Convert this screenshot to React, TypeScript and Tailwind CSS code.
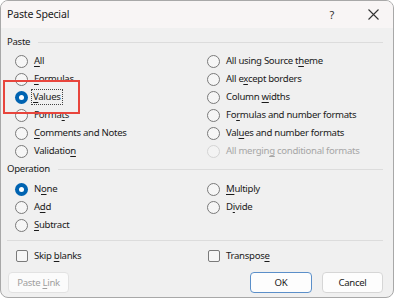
import React from "react";

const U = ({ children }: { children: React.ReactNode }) => <span className="underline underline-offset-[2px]">{children}</span>;

function Radio({ checked = false, disabled = false, children, focus = false }: { checked?: boolean; disabled?: boolean; children: React.ReactNode; focus?: boolean }) {
  return (
    <div className="flex h-[18px] items-center whitespace-nowrap">
      {checked ? (
        <span className="flex h-[13px] w-[13px] shrink-0 items-center justify-center rounded-full bg-[#0063b1]">
          <span className="h-[5px] w-[5px] rounded-full bg-white" />
        </span>
      ) : (
        <span className={`h-[13px] w-[13px] shrink-0 rounded-full border ${disabled ? "border-[#d4d4d4] bg-[#f3f3f3]" : "border-[#7a7a7a] bg-[#f6f6f6]"}`} />
      )}
      <span className={`${focus ? "ml-[4px] px-[1px] py-[2px] outline-1 outline-dotted outline-[#444]" : "ml-[6px]"} ${disabled ? "text-[#a6a6a6]" : "text-[#1b1b1b]"}`}>{children}</span>
    </div>
  );
}

function Check({ children }: { children: React.ReactNode }) {
  return (
    <div className="flex h-[16px] items-center whitespace-nowrap">
      <span className="h-[12px] w-[12px] rounded-[2px] border border-[#7a7a7a] bg-[#f6f6f6]" />
      <span className="ml-[6px] text-[#1b1b1b]">{children}</span>
    </div>
  );
}

function Header({ children }: { children: React.ReactNode }) {
  return (
    <div className="flex h-[16px] items-center gap-[8px] pr-[4px]">
      <span className="text-[#1b1b1b]">{children}</span>
      <span className="h-px flex-1 bg-[#dcdcdc]" />
    </div>
  );
}

export default function App() {
  return (
    <div className="h-[300px] w-[396px] bg-white" style={{ fontFamily: '"Noto Sans", "Open Sans", sans-serif' }}>
      <div className="relative h-[298px] w-[394px] overflow-hidden rounded-[8px] border border-[#a8a8a8] bg-[#f0f0f0] text-[9.6px] leading-none tracking-[-0.3px]">
        <div className="flex h-[27px] items-center bg-[#f8f5f5] pl-[6px] pr-[14px]">
          <span className="text-[10.6px] tracking-[-0.2px] text-[#1b1b1b]">Paste Special</span>
          <span className="ml-auto mr-[34px] text-[11px] text-[#333]">?</span>
          <svg width="11" height="11" viewBox="0 0 11 11" className="text-[#333]">
            <path d="M0.5 0.5 L10.5 10.5 M10.5 0.5 L0.5 10.5" stroke="currentColor" strokeWidth="1.1" />
          </svg>
        </div>
        <div className="px-[6px]">
          <div className="mt-[6px]"><Header>Paste</Header></div>
          <div className="mt-[2px] grid grid-cols-[192px_1fr] pl-[8px]">
            <div>
              <Radio><U>A</U>ll</Radio>
              <Radio><U>F</U>ormulas</Radio>
              <Radio checked focus><U>V</U>alues</Radio>
              <Radio>Forma<U>t</U>s</Radio>
              <Radio><U>C</U>omments and Notes</Radio>
              <Radio>Validatio<U>n</U></Radio>
            </div>
            <div>
              <Radio>All using Source t<U>h</U>eme</Radio>
              <Radio>All e<U>x</U>cept borders</Radio>
              <Radio>Column <U>w</U>idths</Radio>
              <Radio>Fo<U>r</U>mulas and number formats</Radio>
              <Radio>Val<U>u</U>es and number formats</Radio>
              <Radio disabled>All mergin<U>g</U> conditional formats</Radio>
            </div>
          </div>
          <div className="mt-[1px]"><Header>Operation</Header></div>
          <div className="mt-[3px] grid grid-cols-[192px_1fr] pl-[8px]">
            <div>
              <Radio checked>N<U>o</U>ne</Radio>
              <Radio>A<U>d</U>d</Radio>
              <Radio><U>S</U>ubtract</Radio>
            </div>
            <div>
              <Radio><U>M</U>ultiply</Radio>
              <Radio>D<U>i</U>vide</Radio>
            </div>
          </div>
          <div className="mr-[4px] mt-[6px] h-px bg-[#dcdcdc]" />
          <div className="mt-[7px] grid grid-cols-[192px_1fr] pl-[9px]">
            <Check>Skip <U>b</U>lanks</Check>
            <Check>Transpos<U>e</U></Check>
          </div>
          <div className="mt-[8px] flex items-center">
            <button className="ml-[1px] h-[21px] w-[61px] rounded-[4px] border border-[#e2e2e2] bg-[#fbfbfb] text-[9.6px] text-[#a0a0a0]">Paste <U>L</U>ink</button>
            <button className="ml-auto h-[21px] w-[62px] rounded-[4px] border border-[#5b8fc9] bg-[#fdfdfd] text-[9.6px] text-[#1b1b1b]">OK</button>
            <button className="ml-[10px] mr-[4px] h-[21px] w-[61px] rounded-[4px] border border-[#d6d6d6] bg-[#fdfdfd] text-[9.6px] text-[#1b1b1b]">Cancel</button>
          </div>
        </div>
        <div className="absolute left-[2px] top-[79px] h-[34px] w-[77px] border-2 border-[#e8453c]" />
      </div>
    </div>
  );
}
